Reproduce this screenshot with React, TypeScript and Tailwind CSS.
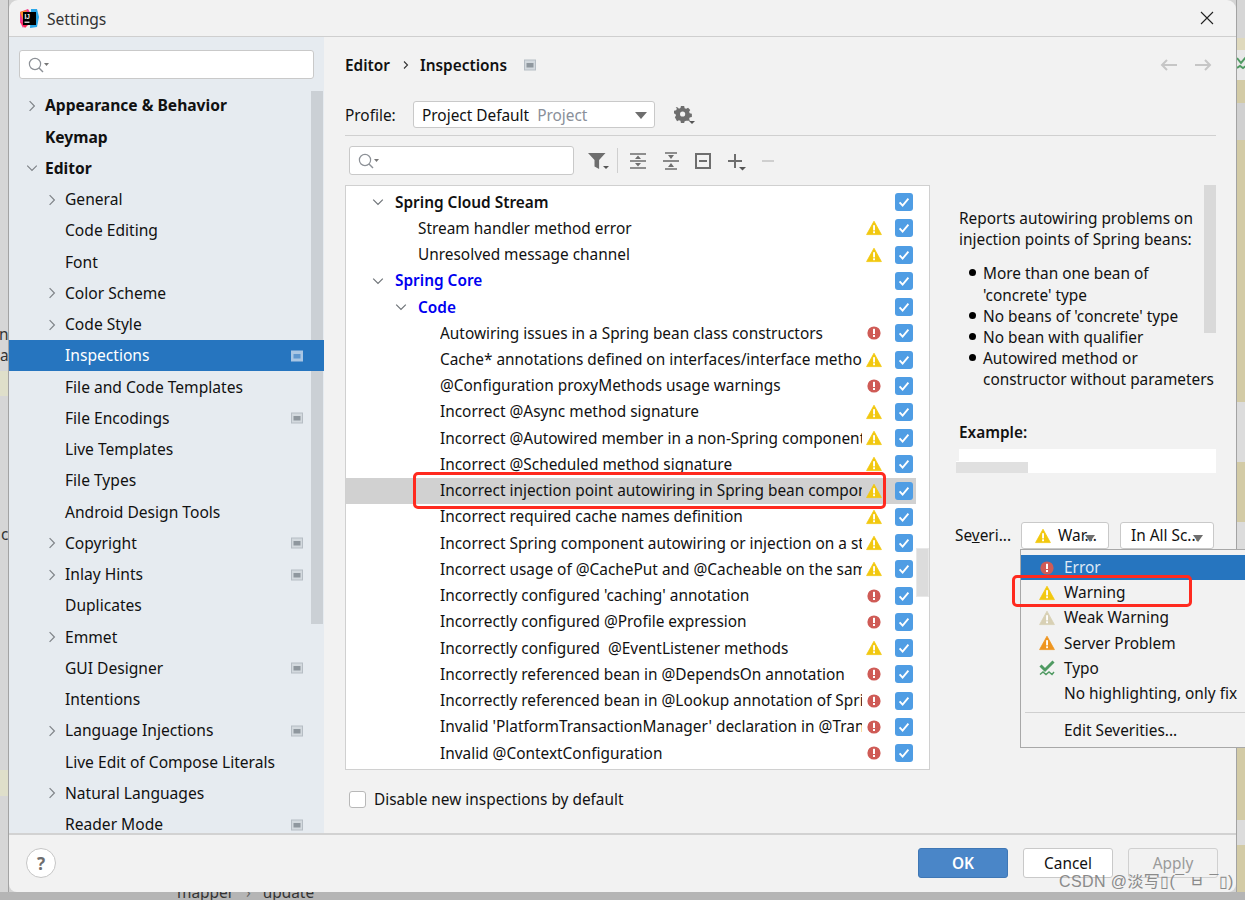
import React from "react";

function Warn({ color = "#f2c80f", size = 16 }: { color?: string; size?: number }) {
  return (
    <svg width={size} height={size} viewBox="0 0 16 16" className="shrink-0">
      <path d="M8 1.2 15.4 14.6H.6Z" fill={color} stroke={color} strokeWidth="0.8" strokeLinejoin="round" />
      <rect x="7.1" y="5.2" width="1.9" height="5.2" fill="#fff" />
      <rect x="7.1" y="11.3" width="1.9" height="1.9" fill="#fff" />
    </svg>
  );
}

function Err({ size = 14 }: { size?: number }) {
  return (
    <svg width={size} height={size} viewBox="0 0 14 14" className="shrink-0">
      <circle cx="7" cy="7" r="6.6" fill="#cf5b56" />
      <rect x="6" y="2.8" width="2" height="5.2" fill="#fff" />
      <rect x="6" y="9" width="2" height="2" fill="#fff" />
    </svg>
  );
}

function Check() {
  return (
    <div className="w-[18px] h-[18px] rounded-[3px] bg-[#4f9de4] flex items-center justify-center shrink-0">
      <svg width="12" height="12" viewBox="0 0 12 12">
        <path d="M1.6 6.4 4.6 9.6 10.4 2.6" fill="none" stroke="#fff" strokeWidth="1.9" />
      </svg>
    </div>
  );
}

function Chev({ down, color = "#7f8388" }: { down?: boolean; color?: string }) {
  return (
    <svg width="12" height="12" viewBox="0 0 12 12" className="shrink-0">
      <path d={down ? "M1.2 3.6 6 8.4 10.8 3.6" : "M3.6 1.2 8.4 6 3.6 10.8"} fill="none" stroke={color} strokeWidth="1.2" />
    </svg>
  );
}

function Badge({ selected }: { selected?: boolean }) {
  return (
    <svg width="12" height="12" viewBox="0 0 12 12" className="shrink-0">
      <rect x="0.5" y="1" width="11" height="10" fill={selected ? "#a9c6e4" : "#d3d9de"} stroke={selected ? "#a9c6e4" : "#b6bdc4"} />
      <rect x="2.5" y="4" width="7" height="4.5" fill={selected ? "#5f97cf" : "#8f979e"} />
    </svg>
  );
}

function SearchBox({ className }: { className: string }) {
  return (
    <div className={"bg-white border border-[#c9c9c9] rounded-[3px] flex items-center pl-[7px] " + className}>
      <svg width="22" height="18" viewBox="0 0 22 18">
        <circle cx="8" cy="8" r="5.6" fill="none" stroke="#8c9096" strokeWidth="1.2" />
        <path d="M12 12 16 16" stroke="#8c9096" strokeWidth="1.4" />
        <path d="M17 7h5l-2.5 3Z" fill="#777" />
      </svg>
    </div>
  );
}

const navItems: [string, number, string?, boolean?][] = [
  ["Appearance & Behavior", 0, "r"],
  ["Keymap", 0],
  ["Editor", 0, "d"],
  ["General", 1, "r"],
  ["Code Editing", 1],
  ["Font", 1],
  ["Color Scheme", 1, "r"],
  ["Code Style", 1, "r"],
  ["Inspections", 1, undefined, true],
  ["File and Code Templates", 1],
  ["File Encodings", 1, undefined, true],
  ["Live Templates", 1],
  ["File Types", 1],
  ["Android Design Tools", 1],
  ["Copyright", 1, "r", true],
  ["Inlay Hints", 1, "r", true],
  ["Duplicates", 1],
  ["Emmet", 1, "r"],
  ["GUI Designer", 1, undefined, true],
  ["Intentions", 1],
  ["Language Injections", 1, "r", true],
  ["Live Edit of Compose Literals", 1],
  ["Natural Languages", 1, "r"],
  ["Reader Mode", 1, undefined, true],
];

type Row = { t: string; d: number; k?: "b" | "s"; i?: "w" | "e"; sel?: boolean };
const rows: Row[] = [
  { t: "Spring Cloud Stream", d: 1, k: "b" },
  { t: "Stream handler method error", d: 2, i: "w" },
  { t: "Unresolved message channel", d: 2, i: "w" },
  { t: "Spring Core", d: 1, k: "s" },
  { t: "Code", d: 2, k: "s" },
  { t: "Autowiring issues in a Spring bean class constructors", d: 3, i: "e" },
  { t: "Cache* annotations defined on interfaces/interface methods", d: 3, i: "w" },
  { t: "@Configuration proxyMethods usage warnings", d: 3, i: "e" },
  { t: "Incorrect @Async method signature", d: 3, i: "w" },
  { t: "Incorrect @Autowired member in a non-Spring component", d: 3, i: "w" },
  { t: "Incorrect @Scheduled method signature", d: 3, i: "w" },
  { t: "Incorrect injection point autowiring in Spring bean components", d: 3, i: "w", sel: true },
  { t: "Incorrect required cache names definition", d: 3, i: "w" },
  { t: "Incorrect Spring component autowiring or injection on a static", d: 3, i: "w" },
  { t: "Incorrect usage of @CachePut and @Cacheable on the same method", d: 3, i: "w" },
  { t: "Incorrectly configured 'caching' annotation", d: 3, i: "e" },
  { t: "Incorrectly configured @Profile expression", d: 3, i: "e" },
  { t: "Incorrectly configured \u00a0@EventListener methods", d: 3, i: "w" },
  { t: "Incorrectly referenced bean in @DependsOn annotation", d: 3, i: "e" },
  { t: "Incorrectly referenced bean in @Lookup annotation of Spring", d: 3, i: "e" },
  { t: "Invalid 'PlatformTransactionManager' declaration in @Transactional", d: 3, i: "e" },
  { t: "Invalid @ContextConfiguration", d: 3, i: "e" },
];

function TreeRow({ r }: { r: Row }) {
  const indent = r.d === 1 ? "pl-[49px]" : r.d === 2 ? "pl-[72px]" : "pl-[94px]";
  const width = r.d === 1 ? "w-[467px]" : r.d === 2 ? "w-[444px]" : "w-[422px]";
  const weight = r.k ? "font-semibold" : "";
  const color = r.k === "s" ? "text-[#0000f0]" : "text-[#111]";
  return (
    <div className={"relative flex items-center w-[570px] h-[26.24px] " + indent + (r.sel ? " bg-[#d1d1d1]" : "")}>
      {r.k && (
        <span className={r.d === 1 ? "absolute left-[26px]" : "absolute left-[49px]"}>
          <Chev down color="#6e7378" />
        </span>
      )}
      <div className={"overflow-hidden whitespace-nowrap " + width + " " + weight + " " + color}>{r.t}</div>
      <div className="w-[16px] ml-[4px] flex justify-center shrink-0">
        {r.i === "w" && <Warn />}
        {r.i === "e" && <Err />}
      </div>
      <div className="ml-[13px]">
        <Check />
      </div>
    </div>
  );
}

function Dot() {
  return <span className="absolute left-[-14px] top-[6px] w-[7px] h-[7px] rounded-full bg-black" />;
}

const ToolIcon = ({ children, w = 20 }: { children: React.ReactNode; w?: number }) => (
  <svg width={w} height="20" viewBox={`0 0 ${w} 20`} className="shrink-0">
    {children}
  </svg>
);

export default function App() {
  return (
    <div className="relative w-[1245px] h-[900px] overflow-hidden bg-[#d4d4d4] font-['Noto_Sans',sans-serif] text-[15.4px] leading-[21px] text-[#111]">
      <div className="flex h-[892px]">
        {/* left backdrop */}
        <div className="w-[9px] h-full flex flex-col bg-[#d6d6d6] border-r border-[#a3a3a3] overflow-hidden shrink-0 text-[#333]">
          <div className="h-[324px] shrink-0" />
          <div className="h-[21px] shrink-0 -ml-[1px] leading-[21px]">n</div>
          <div className="h-[26px] shrink-0 leading-[21px]">a</div>
          <div className="h-[25px] shrink-0 bg-[#dfdfca]" />
          <div className="h-[128px] shrink-0" />
          <div className="h-[22px] shrink-0 pl-[1px] leading-[21px]">c</div>
          <div className="h-[224px] shrink-0" />
          <div className="h-[26px] shrink-0 bg-[#dfdfca]" />
        </div>

        {/* dialog */}
        <div className="w-[1227px] h-full shrink-0 bg-[#f2f2f2] rounded-t-[9px] rounded-b-[8px] overflow-hidden flex flex-col">
          {/* title */}
          <div className="h-[37px] shrink-0 flex items-center border-b border-[#cfcfcf] pl-[10px] pr-[22px]">
            <svg width="20" height="21" viewBox="0 0 20 21" className="shrink-0">
              <path d="M1 4 9 1l3 5-8 14-3-6Z" fill="#f5378b" />
              <path d="M1 4 8 2 4 12Z" fill="#fc8a2b" />
              <path d="M12 1h6l2 8-2 10-7 1Z" fill="#2aa6e8" />
              <path d="M1 14 6 20 10 16Z" fill="#fe2857" />
              <rect x="4" y="4" width="13" height="13" fill="#000" />
              <text x="5.5" y="11" fontSize="6.5" fontWeight="700" fill="#fff" fontFamily="Liberation Sans">IJ</text>
              <rect x="5.5" y="13.6" width="5" height="1.2" fill="#fff" />
            </svg>
            <div className="ml-[8px] pt-[3px] text-[15.6px] text-[#333] flex-1">Settings</div>
            <svg width="14" height="14" viewBox="0 0 14 14">
              <path d="M1 1 13 13M13 1 1 13" stroke="#222" strokeWidth="1.1" />
            </svg>
          </div>

          <div className="flex h-[796px] shrink-0">
            {/* sidebar */}
            <div className="relative w-[315px] shrink-0 bg-[#e6ebf0] overflow-hidden">
              <div className="pt-[13px] pl-[10px] pr-[10px]">
                <SearchBox className="h-[29px] w-[295px]" />
              </div>
              <div className="mt-[11.2px] text-[15.6px]">
                {navItems.map(([name, depth, chev, badge]) => {
                  const sel = name === "Inspections";
                  return (
                    <div
                      key={name}
                      className={
                        "relative flex items-center h-[31.26px] pr-[21px] " +
                        (depth === 0 ? "pl-[36px] font-bold " : "pl-[56px] ") +
                        (sel ? "z-10 bg-[#2675bf] text-white" : "text-[#111]")
                      }
                    >
                      {chev && (
                        <span className={"absolute " + (depth === 0 ? "left-[17px]" : "left-[37px]")}>
                          <Chev down={chev === "d"} />
                        </span>
                      )}
                      <span className="flex-1">{name}</span>
                      {badge && <Badge selected={sel} />}
                    </div>
                  );
                })}
              </div>
              <div className="absolute left-[302px] top-[54px] w-[12px] h-[533px] bg-[#cbd0d5]" />
            </div>

            {/* main */}
            <div className="flex-1 min-w-0 pl-[21px] pr-[20px]">
              <div className="h-[30px] mt-[13px] flex items-center font-semibold">
                <span>Editor</span>
                <svg width="8" height="10" viewBox="0 0 8 10" className="ml-[12px]">
                  <path d="M2 1.5 5.5 5 2 8.5" fill="none" stroke="#333" strokeWidth="1.1" />
                </svg>
                <span className="ml-[10px]">Inspections</span>
                <span className="ml-[17px]"><Badge /></span>
                <div className="flex-1" />
                <svg width="20" height="14" viewBox="0 0 20 14" className="mr-[14px]">
                  <path d="M18 7H3M8 2 3 7l5 5" fill="none" stroke="#c6c6c6" strokeWidth="2" />
                </svg>
                <svg width="20" height="14" viewBox="0 0 20 14" className="mr-[3px]">
                  <path d="M2 7h15M12 2l5 5-5 5" fill="none" stroke="#c6c6c6" strokeWidth="2" />
                </svg>
              </div>

              <div className="mt-[21px] h-[27px] flex items-center">
                <span className="w-[68px] pt-[1px] whitespace-nowrap">Profile:</span>
                <div className="w-[242px] h-[27px] pt-[1px] bg-white border border-[#c9c9c9] rounded-[3px] flex items-center pl-[8px] pr-[7px]">
                  <span>Project Default</span>
                  <span className="ml-[8px] text-[#8a8f99]">Project</span>
                  <div className="flex-1" />
                  <svg width="12" height="7" viewBox="0 0 12 7">
                    <path d="M0 0h12L6 7Z" fill="#6e6e6e" />
                  </svg>
                </div>
                <svg width="22" height="20" viewBox="0 0 22 20" className="ml-[18px]">
                  <path
                    d="M7.3 1h3.4l.5 2.3 1.6.7 2-1.2 2.3 2.4-1.2 2 .6 1.5 2.3.6v3.3l-2.3.6-.6 1.5 1.2 2-2.3 0-2-.2-1.6.7-.5 1.8H7.3l-.5-2.3-1.6-.7-2 1.2L.9 13l1.2-2-.6-1.5L0 9V6l2.3-.6L3 3.9 1.8 2 4 2.5l1.2 1.4 1.6-.7Z"
                    fill="#6e6e6e"
                    transform="translate(1 0) scale(.95)"
                  />
                  <circle cx="9.6" cy="9" r="2.6" fill="#f2f2f2" />
                  <path d="M16 16h6l-3 3Z" fill="#555" />
                </svg>
              </div>

              <div className="mt-[7px] h-px w-[871px] bg-[#d0d0d0]" />

              <div className="mt-[10px] h-[29px] flex items-center pl-[4px]">
                <SearchBox className="h-[29px] w-[225px]" />
                <div className="ml-[14px] flex items-center">
                  <ToolIcon w={22}>
                    <path d="M0 2h17.5l-6.4 7V18l-4.6-2.4V9Z" fill="#6e6e6e" />
                    <path d="M15 15h6l-3 3Z" fill="#555" />
                  </ToolIcon>
                </div>
                <div className="ml-[7px] w-px h-[25px] bg-[#cfcfcf]" />
                <div className="ml-[10px] flex items-center gap-[12.5px]">
                  <ToolIcon>
                    <path d="M2 3h16M2 17h16M2 10h16" stroke="#6e6e6e" strokeWidth="1.6" fill="none" />
                    <path d="M10 4.5 13 8H7ZM10 15.5 7 12h6Z" fill="#6e6e6e" />
                  </ToolIcon>
                  <ToolIcon>
                    <path d="M2 10h16" stroke="#6e6e6e" strokeWidth="1.6" />
                    <path d="M10 8 7 4h6ZM10 12l3 4H7Z" fill="#6e6e6e" />
                    <path d="M4 2h12M4 18h12" stroke="#6e6e6e" strokeWidth="1.6" />
                  </ToolIcon>
                  <ToolIcon>
                    <rect x="3" y="3" width="14" height="14" fill="none" stroke="#6e6e6e" strokeWidth="2" />
                    <path d="M6 10h8" stroke="#6e6e6e" strokeWidth="2" />
                  </ToolIcon>
                  <ToolIcon w={24}>
                    <path d="M2 10h14M9 3v14" stroke="#6e6e6e" strokeWidth="2" />
                    <path d="M13 16h7l-3.5 3.5Z" fill="#555" />
                  </ToolIcon>
                </div>
                <div className="ml-[11px]">
                  <ToolIcon w={14}>
                    <path d="M1 10h12" stroke="#cfcfcf" strokeWidth="2" />
                  </ToolIcon>
                </div>
              </div>

              <div className="mt-[10px] flex">
                {/* tree */}
                <div className="relative w-[585px] h-[585px] shrink-0 bg-white border border-[#d0d0d0] overflow-hidden pt-[3px]">
                  {rows.map((r) => (
                    <TreeRow key={r.t} r={r} />
                  ))}
                  <div className="absolute left-[570px] top-[362px] w-[13px] h-[49px] bg-[#dcdcdc] border border-[#e8e8e8]" />
                </div>

                {/* description */}
                <div className="relative flex-1 min-w-0 pl-[29px] pt-[23px]">
                  <div className="h-[21.2px] whitespace-nowrap">Reports autowiring problems on</div>
                  <div className="h-[21.2px] whitespace-nowrap">injection points of Spring beans:</div>
                  <div className="mt-[13px] pl-[24px]">
                    <div className="relative h-[21.2px]"><Dot />More than one bean of</div>
                    <div className="h-[21.2px]">'concrete' type</div>
                    <div className="relative h-[21.2px]"><Dot />No beans of 'concrete' type</div>
                    <div className="relative h-[21.2px]"><Dot />No bean with qualifier</div>
                    <div className="relative h-[21.2px]"><Dot />Autowired method or</div>
                    <div className="h-[21.2px] whitespace-nowrap">constructor without parameters</div>
                  </div>
                  <div className="mt-[31px] font-semibold">Example:</div>
                  <div className="mt-[6.5px] w-[257px] h-[24px] bg-white overflow-hidden pl-[40px] pt-[19.5px] whitespace-nowrap text-[#222]">public class Component example</div>
                  <div className="absolute left-[26px] top-[276px] w-[72px] h-[12px] bg-[#e0e0e0] border-t border-white" />
                  <div className="absolute left-[274px] top-0 w-[12px] h-[148px] bg-[#d9d9d9]" />

                  <div className="absolute left-[25px] top-[337px] h-[27px] flex items-center">
                    <span className="w-[66px] whitespace-nowrap">
                      Se<span className="underline">v</span>eri...
                    </span>
                    <div className="w-[88px] h-[27px] bg-white border border-[#c9c9c9] rounded-[3px] flex items-center pl-[13px] relative">
                      <Warn />
                      <span className="ml-[7px]">War...</span>
                      <svg width="10" height="7" viewBox="0 0 10 7" className="absolute left-[63px] top-[12px]">
                        <path d="M0 0h10L5 7Z" fill="#6e6e6e" />
                      </svg>
                    </div>
                    <div className="ml-[11px] w-[94px] h-[27px] bg-white border border-[#c9c9c9] rounded-[3px] flex items-center pl-[10px] relative">
                      <span>In All Sc...</span>
                      <svg width="10" height="7" viewBox="0 0 10 7" className="absolute left-[72px] top-[12px]">
                        <path d="M0 0h10L5 7Z" fill="#6e6e6e" />
                      </svg>
                    </div>
                  </div>
                </div>
              </div>

              <div className="mt-[20px] flex items-center pl-[4px] h-[18px]">
                <div className="w-[17px] h-[17px] bg-white border border-[#b8b8b8] rounded-[3px]" />
                <span className="ml-[8px]">Disable new inspections by default</span>
              </div>
            </div>
          </div>

          {/* footer */}
          <div className="flex-1 border-t-2 border-[#d2d2d2] flex items-start pt-[13px] pl-[17px] pr-[18px]">
            <div className="w-[30px] h-[30px] rounded-full bg-white border border-[#c6c6c6] flex items-center justify-center font-bold text-[#6e6e6e] text-[17px]">?</div>
            <div className="flex-1" />
            <div className="w-[90px] h-[30px] rounded-[3px] bg-[#4a86c8] border border-[#3f77b5] text-white font-semibold flex items-center justify-center">OK</div>
            <div className="ml-[15px] w-[90px] h-[30px] rounded-[3px] bg-white border border-[#c9c9c9] flex items-center justify-center">Cancel</div>
            <div className="ml-[15px] w-[90px] h-[30px] rounded-[3px] bg-[#f2f2f2] border border-[#d0d0d0] text-[#9a9a9a] flex items-center justify-center">Apply</div>
          </div>
        </div>

        {/* right backdrop */}
        <div className="w-[9px] h-full flex flex-col bg-[#d3cba6] border-l border-[#a3a3a3] overflow-hidden shrink-0">
          <div className="h-[38px] shrink-0 bg-[#d6d6d6]" />
          <div className="h-[12px] shrink-0 bg-[#dfd9bd]" />
          <div className="h-[30px] shrink-0 bg-[#e8e8e8] pt-[4px]">
            <svg width="9" height="20" viewBox="0 0 9 20">
              <path d="M0 4 4 9 9 3M0 14l3-2 3 2 3-2" fill="none" stroke="#4f9a62" strokeWidth="2" />
            </svg>
          </div>
          <div className="h-[23px] shrink-0" />
          <div className="h-[37px] shrink-0 bg-[#d0d0d0]" />
          <div className="h-[262px] shrink-0" />
          <div className="h-[60px] shrink-0 bg-[#dcdcdc]" />
          <div className="h-[60px] shrink-0" />
          <div className="h-[53px] shrink-0 bg-[#dcdcdc]" />
          <div className="h-[245px] shrink-0" />
          <div className="h-[25px] shrink-0 bg-[#dcdcdc]" />
        </div>
      </div>

      {/* backdrop strip under the dialog */}
      <div className="h-[8px] bg-[#b5b5b5] pl-[177px] overflow-hidden text-[#333] leading-[8px] whitespace-nowrap">
        <span className="relative -top-[3px]">mapper</span>
        <span className="relative -top-[3px] ml-[12px] text-[#666]">›</span>
        <span className="relative -top-[3px] ml-[12px]">update</span>
      </div>

      {/* severity popup */}
      <div className="absolute left-[1020px] top-[549px] w-[226px] h-[199px] bg-[#f2f2f2] border border-[#a8a8a8] pt-[5px] overflow-hidden">
        <PopupRow icon={<Err />} label="Error" sel />
        <PopupRow icon={<Warn />} label="Warning" />
        <PopupRow icon={<Warn color="#d8d0b4" />} label="Weak Warning" />
        <PopupRow icon={<Warn color="#ee9520" />} label="Server Problem" />
        <PopupRow
          icon={
            <svg width="16" height="16" viewBox="0 0 16 16">
              <path d="M1.5 5.5 6 10 14.5 1.5" fill="none" stroke="#4f9a62" strokeWidth="3" />
              <path d="M1 14.5l3-2.5 3 2.5 3-2.5 3 2.5 2-2.5" fill="none" stroke="#4f9a62" strokeWidth="1.4" />
            </svg>
          }
          label="Typo"
        />
        <PopupRow label="No highlighting, only fix" />
        <div className="mt-[6px] ml-[4px] h-px bg-[#cfcfcf]" />
        <div className="mt-[5px]">
          <PopupRow label="Edit Severities..." />
        </div>
      </div>

      {/* red annotations */}
      <div className="absolute left-[413px] top-[472px] w-[473px] h-[37px] border-[3px] border-[#ff2a1f] rounded-[5px]" />
      <div className="absolute left-[1012px] top-[575px] w-[180px] h-[32px] border-[3px] border-[#ff2a1f] rounded-[5px]" />

      {/* watermark */}
      <div className="absolute left-[1059px] top-[871px] whitespace-nowrap text-[#8a8a8a] text-[16px] tracking-[0.4px] font-['Liberation_Sans','Noto_Sans_CJK_SC',sans-serif]">
        CSDN @淡写▯(¯ ㅂ ¯▯)
      </div>
    </div>
  );
}

function PopupRow({ icon, label, sel }: { icon?: React.ReactNode; label: string; sel?: boolean }) {
  return (
    <div className={"flex items-center h-[25.2px] whitespace-nowrap pl-[18px] " + (sel ? "bg-[#2675bf] text-[#dfe9f5]" : "text-[#111]")}>
      <div className="w-[16px] flex justify-center shrink-0">{icon}</div>
      <span className="ml-[9px]">{label}</span>
    </div>
  );
}
